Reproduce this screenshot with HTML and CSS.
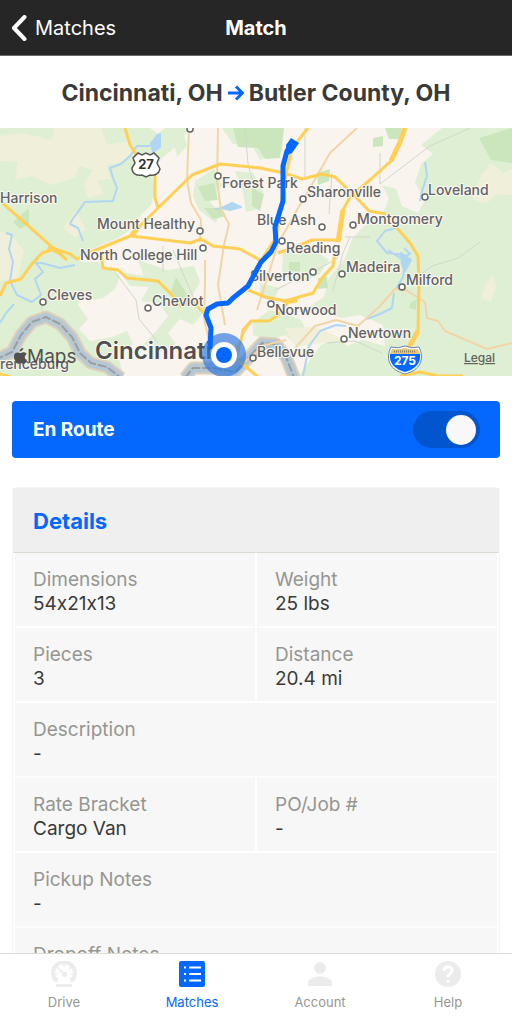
FILE: index.html
```html
<!DOCTYPE html>
<html lang="en">
<head>
<meta charset="utf-8">
<meta name="viewport" content="width=device-width, initial-scale=1">
<title>Match</title>
<link rel="stylesheet" href="styles.css">
</head>
<body>
<div class="app">
  <header class="navbar">
    <button class="back" type="button">
      <svg class="back-icon" viewBox="0 0 16 26" aria-hidden="true"><path d="M13.500 2 3 13l10.500 11"/></svg>
      <span>Matches</span>
    </button>
    <h1 class="navbar-title">Match</h1>
  </header>

  <main class="content">
    <h2 class="trip">
      <span>Cincinnati, OH</span>
      <svg class="trip-arrow" viewBox="0 0 16 16" role="img" aria-label="to"><path d="M0 8h14M8 1.500 14.500 8 8 14.500"/></svg>
      <span>Butler County, OH</span>
    </h2>

    <svg class="map" viewBox="0 128 512 248" preserveAspectRatio="xMidYMid slice" role="img" aria-label="Route map">
      <rect class="land" x="0" y="128" width="512" height="248"/>
      <g class="green">
        <path d="M0 128H150L158 134 165 128H189L181 141 172 150 162 158 152 172 155 190 151 205 140 216 129 231 118 238 92 249 80 262 98 262 120 276 115 289 103 298 92 300 83 293 78 305 88 319 79 329 90 341 112 337 127 331 133 344 117 354 124 376H0Z"/>
        <path d="M120 272 144 276 138 260 167 270 194 266 200 282 191 298 203 313 193 325 180 319 168 333 176 344 160 352 144 344 157 330 168 316 159 303 141 301 149 287 130 286Z"/>
        <path d="M171 128 182 128 187 146 177 157ZM195 181 214 169 222 185 210 202 220 213 216 223 199 210 193 196ZM222 128H284L282 151 260 160 252 145 233 144ZM235 171 253 173 263 191 258 209 246 212 243 192Z"/>
        <path d="M442 128H512V376H299L310 360 321 345 338 338 347 346 362 340 385 346 383 325 360 315 342 318 320 311 302 311 324 297 329 278 345 259 352 239 363 227 382 216 389 198 382 185 396 189 402 206 418 213 425 200 415 183 421 164 433 154 421 145Z"/>
        <path d="M283 251H315L329 260 319 275 297 283 282 274ZM260 283 280 288 273 300 260 295ZM253 322 270 310 300 319 309 334 297 347 286 335 267 340 253 335Z"/>
      </g>
      <g class="forest">
        <path d="M233 128 284 128 280 158 265 159 258 148 238 147ZM198 187 214 183 218 200 205 201ZM13 222 29 208 29 224 20 229ZM252 188 264 194 260 211 252 206ZM176 277 188 296 178 300 171 291ZM317 173 330 169 329 181 318 185ZM318 278 327 277 328 288 318 289ZM289 262 300 262 300 271 289 271ZM373 138 383 136 383 146 373 147ZM385 128 402 128 399 139 389 139ZM479 138 512 128V163L491 160ZM411 302 417 299 416 310 409 308ZM204 208 222 208 226 216 213 219Z"/>
      </g>
      <g class="field">
        <path d="M0 136 23 133 52 140 54 128H101L107 145 128 141 134 153 119 163 106 165 111 179 97 180 103 194 88 198 84 184 93 170 79 166 75 178 52 185 32 176 15 180 18 162 0 161ZM0 231 13 237 24 251 17 279 0 281ZM63 228 76 211 86 229 75 238ZM481 176 491 163 503 173 512 169V195L496 194 486 204 472 199ZM485 285 493 275 496 286 491 302 481 298ZM285 328 315 327 346 340 321 343 295 347Z"/>
      </g>
      <g class="water">
        <path d="M158 134 150 146 137 146 130 156 121 164 110 168 113 178 117 188 113 201 85 202 72 220 70 224 78 228 83 241M6 233 12 235 9 249 13 262 10 281 17 295 32 302 41 295 35 279 43 272 36 263 42 263 60 268 75 265M14 304 6 313 0 323M425 162 427 176 422 191 420 201M399 227 385 231 377 241 387 253 399 254 405 262 403 277 396 289M388 250 400 258 410 254 404 248M394 293 392 308 380 314 367 319M215 209 238 206M320 331 336 325 346 326M320 331 309 346 303 376"/>
        <path d="M151 143 160 134 160 147 153 152ZM222 208 232 203 241 207 230 210ZM401 253 411 260 405 271 402 264Z" class="lake"/>
      </g>
      <g class="river">
        <path class="river-bank" d="M-5 360 12 352 21 335 32 322 46 317 60 324 72 337 80 353 91 363 107 367 121 378M185 378 193 368 213 368 235 372 252 354 262 343 276 344 286 357 295 380"/>
        <path class="river-bed" d="M-5 360 12 352 21 335 32 322 46 317 60 324 72 337 80 353 91 363 107 367 121 378M185 378 193 368 213 368 235 372 252 354 262 343 276 344 286 357 295 380"/>
        <path class="river-line" d="M-5 360 12 352 21 335 32 322 46 317 60 324 72 337 80 353 91 363 107 367 121 378M185 378 193 368 213 368 235 372 252 354 262 343 276 344 286 357 295 380"/>
      </g>
      <g class="lane">
        <path d="M42 300V312M112 268 136 300 139 319 158 342M173 250 194 299M163 246V272M245 128 248 164 260 208M305 128V180M332 173 329 214M380 153V184L430 146 470 128M345 237H370M275 290 322 267 338 258M327 343 355 341 382 353M412 281 432 266 458 258 480 242M350 237 343 253 333 291"/>
      </g>
      <g class="minor">
        <path d="M189 128 187 180 191 203 201 220 200 242M218 128 217 181 221 210 229 224 224 245 218 285 225 325M205 260V285L204 318 211 350M357 128 330 153 314 181 297 210 278 244 257 310M252 320 241 338 238 355M296 347 315 326 336 320 358 326 380 306 395 289 406 290 425 302 427 318 438 321 445 331 487 349 512 343M242 364 265 345 286 340"/>
      </g>
      <g class="road">
        <path d="M125 128 130 145 137 156M155 174V198L158 208M0 201 25 223 51 246 67 260M0 296 6 283 21 279 31 265 42 253 54 249 70 254 77 259 91 252 130 236 158 208 192 175 220 164 260 168 284 173 302 179 322 174 335 177 354 195 369 211 386 214M131 236 190 243 201 239 213 246 240 249 260 260M405 128 400 142 391 161 371 179 350 197 343 210 338 242M340 240 312 240 295 247 278 253M397 228 410 243 418 256 419 284 418 331 409 347M400 376 420 372 438 376H463M101 254 103 268 118 270 127 278 158 281 171 294 181 306 192 301 204 313M335 252 333 266 322 278 313 293 285 301 265 297 248 290M253 321H269L278 315 288 302M308 128 292 148 284 184 277 236 251 276M267 321 251 321 243 330 241 341 233 356 258 377M0 374 14 378"/>
        <path class="road-wide" d="M405 128 400 142 391 161M343 210 338 242M132 235 139 226M48 247 61 253M418 331 409 347M283 302 297 300"/>
      </g>

      <g class="towns">
        <circle cx="190" cy="129" r="3"/><circle cx="218" cy="176" r="3"/><circle cx="200" cy="231" r="3"/><circle cx="203" cy="248" r="3"/>
        <circle cx="303" cy="199" r="3"/><circle cx="322" cy="227" r="3"/><circle cx="353" cy="225" r="3"/><circle cx="425" cy="197" r="3"/>
        <circle cx="282" cy="241" r="3"/><circle cx="313" cy="272" r="3"/><circle cx="342" cy="274" r="3"/><circle cx="402" cy="287" r="3"/>
        <circle cx="43" cy="302" r="3"/><circle cx="148" cy="308" r="3"/><circle cx="271" cy="304" r="3"/><circle cx="344" cy="339" r="3"/><circle cx="253" cy="358" r="3"/>
      </g>
      <g class="labels">
        <text x="0" y="203">Harrison</text>
        <text x="97" y="229">Mount Healthy</text>
        <text x="80" y="260">North College Hill</text>
        <text x="222" y="188">Forest Park</text>
        <text x="307" y="197">Sharonville</text>
        <text x="257" y="225">Blue Ash</text>
        <text x="357" y="224">Montgomery</text>
        <text x="428" y="195">Loveland</text>
        <text x="286" y="253">Reading</text>
        <text x="250" y="281">Silverton</text>
        <text x="346" y="272">Madeira</text>
        <text x="406" y="285">Milford</text>
        <text x="47" y="300">Cleves</text>
        <text x="152" y="306">Cheviot</text>
        <text x="275" y="315">Norwood</text>
        <text x="348" y="338">Newtown</text>
        <text x="257" y="357">Bellevue</text>
        <text x="0" y="369">renceburg</text>
        <text class="city" x="95" y="359">Cincinnati</text>
      </g>

      <g class="us-shield">
        <path d="M138 153 142 155 146 153 150 155 154 153 159 158 157 163 160 169C159 174 154 176 150 175L146 177 142 175C137 176 132 174 132 168L135 163 133 158Z"/>
        <text x="146" y="169">27</text>
      </g>
      <g class="interstate">
        <path class="shield-edge" d="M391 347Q398 349 405 346 412 349 419 347C425 360 420 370 405 374 390 370 385 360 391 347Z"/>
        <path class="shield-top" d="M392 349Q398 350 405 348 412 350 418 349L420 354H390Z"/>
        <path class="shield-body" d="M390 354H420C421 363 416 369 405 372 394 369 389 363 390 354Z"/>
        <path class="shield-word" d="M394 351.500H416"/>
        <text x="405" y="365">275</text>
      </g>

      <circle class="halo" cx="224" cy="355" r="22"/>
      <path class="route" d="M292 143 287 151 283 166V201L275 227 276 242 271 252 261 262 248 286 233 298 228 303 217 304 208 309 206 315 211 328 210 347"/>
      <path class="route-end" d="M291 138 299 143 292 153 287 155 286 145Z"/>
      <circle class="pin" cx="224" cy="355" r="13"/>
      <circle class="pin-dot" cx="224" cy="355" r="8"/>

      <g class="brand">
        <path d="M23.500 348C23 350 21.500 351.500 19.500 351.500 19.500 349.500 21.500 348 23.500 348ZM20 353C22 353 22 352 24 352.300 25.500 352.500 26 353 26.700 354 24 356 24.300 359 27 360 25.500 364 24 364.500 22 363.500 21 363 20 363 19 363.500 17 364.500 15.500 362 14.500 359.500 13 355 15 352 18 352.500Z"/>
        <text x="27" y="363">Maps</text>
      </g>
      <a href="#legal"><text class="legal" x="464" y="362">Legal</text></a>
    </svg>

    <label class="status">
      <span>En Route</span>
      <input class="switch" type="checkbox" role="switch" checked>
    </label>

    <section class="card">
      <h3 class="card-title">Details</h3>
      <dl class="grid">
        <div class="cell"><dt>Dimensions</dt><dd>54x21x13</dd></div>
        <div class="cell"><dt>Weight</dt><dd>25 lbs</dd></div>
        <div class="cell"><dt>Pieces</dt><dd>3</dd></div>
        <div class="cell"><dt>Distance</dt><dd>20.4 mi</dd></div>
        <div class="cell wide"><dt>Description</dt><dd>-</dd></div>
        <div class="cell"><dt>Rate Bracket</dt><dd>Cargo Van</dd></div>
        <div class="cell"><dt>PO/Job #</dt><dd>-</dd></div>
        <div class="cell wide"><dt>Pickup Notes</dt><dd>-</dd></div>
        <div class="cell wide"><dt>Dropoff Notes</dt><dd>-</dd></div>
      </dl>
    </section>
  </main>

  <nav class="tabs">
    <a class="tab" href="#drive">
      <svg viewBox="0 0 26 26" aria-hidden="true">
        <path class="line" d="M5 19.500A11 11 0 1 1 21 19.500" stroke-width="4"/>
        <path class="line" d="M13 4v1M6.500 6.500l1 1M19.500 6.500l-1 1M4 13h1M21 13h1M5.500 18l1-.5M20.500 18l-1-.5" stroke-width="2"/>
        <path class="line" d="M9 9 13 13" stroke-width="2"/><circle cx="13.500" cy="13.500" r="2.500"/>
        <rect x="5" y="23" width="16" height="3" rx="1"/>
      </svg>
      <span>Drive</span>
    </a>
    <a class="tab active" href="#matches" aria-current="page">
      <svg viewBox="0 0 26 26" aria-hidden="true">
        <rect width="26" height="26" rx="2"/>
        <path class="cut" d="M5 6.500h2M5 13h2M5 19.500h2M10 6.500h12M10 13h12M10 19.500h12"/>
      </svg>
      <span>Matches</span>
    </a>
    <a class="tab" href="#account">
      <svg viewBox="0 0 26 26" aria-hidden="true">
        <circle cx="13" cy="7" r="6"/><path d="M1 25V22C1 18 7 15.500 13 15.500S25 18 25 22V25Z"/>
      </svg>
      <span>Account</span>
    </a>
    <a class="tab" href="#help">
      <svg viewBox="0 0 26 26" aria-hidden="true">
        <circle cx="13" cy="13" r="13"/>
        <path class="cut round" d="M9 10C9 4.500 17 5 17 9.500 17 12.500 13 12.500 13 16"/><circle class="dot" cx="13" cy="20" r="1.500"/>
      </svg>
      <span>Help</span>
    </a>
  </nav>
</div>
</body>
</html>
```
FILE: styles.css
```css
* { box-sizing: border-box; }

body {
  margin: 0;
  background: #fff;
  color: #3a3a38;
  font-family: Inter, "Liberation Sans", sans-serif;
  font-feature-settings: "calt" 0;
}

h1, h2, h3, dl, dd { margin: 0; }

.app {
  display: flex;
  flex-direction: column;
  height: 100vh;
}

/* Top bar */
.navbar {
  flex: none;
  display: grid;
  grid-template-columns: 1fr auto 1fr;
  align-items: center;
  height: 56px;
  padding: 1px 11px 0;
  background: #262626;
  border-bottom: 1px solid #6a6a6a;
  color: #fff;
}
.back {
  justify-self: start;
  display: flex;
  align-items: center;
  gap: 8px;
  padding: 0;
  border: 0;
  background: none;
  color: inherit;
  font: inherit;
  font-size: 20px;
  line-height: 24px;
}
.back-icon {
  width: 16px;
  height: 26px;
  fill: none;
  stroke: #fff;
  stroke-width: 4;
  stroke-linecap: round;
  stroke-linejoin: round;
}
.navbar-title {
  font-size: 20px;
  line-height: 24px;
  font-weight: 700;
}

.content {
  flex: 1;
  min-height: 0;
  overflow: hidden;
}

.trip {
  display: flex;
  align-items: center;
  justify-content: center;
  gap: 5px;
  height: 72px;
  padding-top: 1px;
  font-size: 23px;
  line-height: 28px;
  font-weight: 700;
}
.trip-arrow {
  width: 16px;
  height: 16px;
  fill: none;
  stroke: #0468fe;
  stroke-width: 3;
}

/* Map */
.map {
  display: block;
  width: 100%;
  height: 248px;
}
.land { fill: #f9f4ed; }
.green { fill: #deefd4; }
.forest { fill: #cbe6bd; }
.field { fill: #f0f0da; }
.water { fill: none; stroke: #b0d6f2; stroke-width: 2; stroke-linejoin: round; }
.water .lake { fill: #b0d6f2; }
.river { fill: none; stroke-linejoin: round; }
.river-bank { stroke: #ddd0b8; stroke-width: 13; }
.river-bed { stroke: #b6c8d4; stroke-width: 9; }
.river-line { stroke: #9c9d9f; stroke-width: 2; stroke-dasharray: 9 2; }
.lane { fill: none; stroke: #d3d7ca; stroke-width: 1; }
.minor { fill: none; stroke: #f1d5a8; stroke-width: 2; stroke-linejoin: round; }
.road { fill: none; stroke: #ffd055; stroke-width: 3; stroke-linejoin: round; }
.road .road-wide { stroke-width: 5; }
.towns { fill: #fff; stroke: #666; stroke-width: 1.500; }
.labels {
  fill: #626262;
  stroke: #fbf8f2;
  stroke-width: 2px;
  stroke-linejoin: round;
  paint-order: stroke;
  font-size: 14px;
  font-weight: 500;
}
.labels .city { fill: #505050; font-size: 24px; font-weight: 600; }
.us-shield path { fill: #fff; stroke: #555; stroke-width: 1.500; }
.us-shield text { fill: #333; font-size: 13px; font-weight: 700; text-anchor: middle; }
.shield-edge { fill: #fff; stroke: #6785aa; stroke-width: 1; }
.shield-top { fill: #e4c77c; }
.shield-body { fill: #0468fe; }
.shield-word { stroke: #8b805f; stroke-width: 2; stroke-dasharray: 1 1; }
.interstate text { fill: #fff; font-size: 12px; font-weight: 700; text-anchor: middle; }
.halo { fill: #2874df; opacity: 0.65; }
.route { fill: none; stroke: #0468fe; stroke-width: 5; stroke-linejoin: round; stroke-linecap: round; }
.route-end, .pin-dot { fill: #0468fe; }
.pin { fill: #fff; }
.brand { fill: #515151; }
.brand text { font-size: 19px; }
.legal { fill: #606060; font-size: 12px; font-weight: 500; text-decoration: underline; }

/* Status switch */
.status {
  display: flex;
  align-items: center;
  justify-content: space-between;
  height: 57px;
  margin: 25px 12px 29px;
  padding: 0 20px 0 21px;
  border-radius: 4px;
  background: #0468fe;
  color: #fff;
  font-size: 19px;
  line-height: 24px;
  font-weight: 700;
}
.switch {
  appearance: none;
  display: flex;
  align-items: center;
  width: 67px;
  height: 37px;
  margin: 0;
  padding: 0 4px;
  border-radius: 19px;
  background: #0354cf;
}
.switch::before {
  content: "";
  width: 30px;
  height: 30px;
  border-radius: 50%;
  background: #f8f8f8;
}
.switch:checked { justify-content: flex-end; }

/* Details card */
.card {
  margin: 0 12px;
  border: 1px solid #f5f5f5;
  border-radius: 4px 4px 0 0;
}
.card-title {
  padding: 19px 20px 17px;
  border-bottom: 1px solid #dadcd3;
  background: #efefef;
  color: #0468fe;
  font-size: 22px;
  line-height: 28px;
  font-weight: 700;
}
.grid {
  display: grid;
  grid-template-columns: 1fr 1fr;
  gap: 2px;
  padding: 0 2px;
}
.cell {
  height: 73px;
  padding: 15px 18px 0;
  background: #f7f7f7;
  font-size: 19px;
  line-height: 24px;
}
.cell dt { color: #969691; }
.wide { grid-column: 1 / -1; }

/* Bottom tabs */
.tabs {
  flex: none;
  display: grid;
  grid-template-columns: repeat(4, 1fr);
  height: 71px;
  border-top: 1px solid #dcdcd6;
  background: #fff;
}
.tab {
  display: flex;
  flex-direction: column;
  align-items: center;
  gap: 7px;
  padding-top: 7px;
  color: #969691;
  font-size: 13px;
  line-height: 16px;
  text-decoration: none;
}
.tab svg { width: 26px; height: 26px; fill: #ececec; }
.tab .line { fill: none; stroke: #ececec; stroke-linecap: round; }
.tab .cut { fill: none; stroke: #fff; stroke-width: 2; }
.tab .round { stroke-width: 3; }
.tab .dot { fill: #fff; }
.tab.active { color: #0468fe; }
.tab.active svg { fill: #0468fe; }
```
